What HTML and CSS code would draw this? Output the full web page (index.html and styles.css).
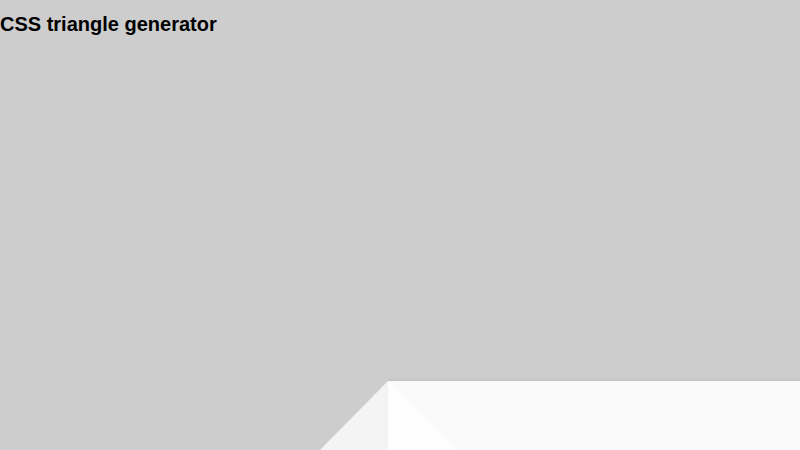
FILE: index.html
```html
<!DOCTYPE html>
<html lang="en">
<head>
    <meta charset="UTF-8">
    <meta name="viewport" content="width=device-width, initial-scale=1.0">
    <title>CSS triangle generator</title>
    <link rel="stylesheet" href="styles.css">
</head>
<body>

<h1 class="title">CSS triangle generator</h1>

<div class="generator">
    <div class="preview">
        <div class="triangle"></div>
    </div>
</div>

</body>
</html>
```
FILE: styles.css
```css
/* Page */
html, body {
    height: 100%;
    overflow: hidden;
}
body {
    margin: 0;
    background-color: #cdcdcd;
    font-family: "Liberation Sans", Arial, sans-serif;
    display: flex;
    flex-direction: column;
}
.title {
    margin: 13px 0 0;
    font-size: 20px;
    line-height: 23px;
    font-weight: bold;
    color: #000;
}

/* Generator panel */
.generator {
    margin-top: 345px;
    margin-left: 388px;
    flex: 1;
    background-color: #fafafa;
    box-shadow: 0 -1px 3px rgba(0, 0, 0, 0.08);
}
.preview {
    position: relative;
}
.triangle {
    position: absolute;
    left: -68px;
    top: 0;
    width: 0;
    height: 0;
    border-left: 68px solid transparent;
    border-right: 69px solid transparent;
    border-bottom: 69px solid rgba(255, 255, 255, 0.78);
}
```
